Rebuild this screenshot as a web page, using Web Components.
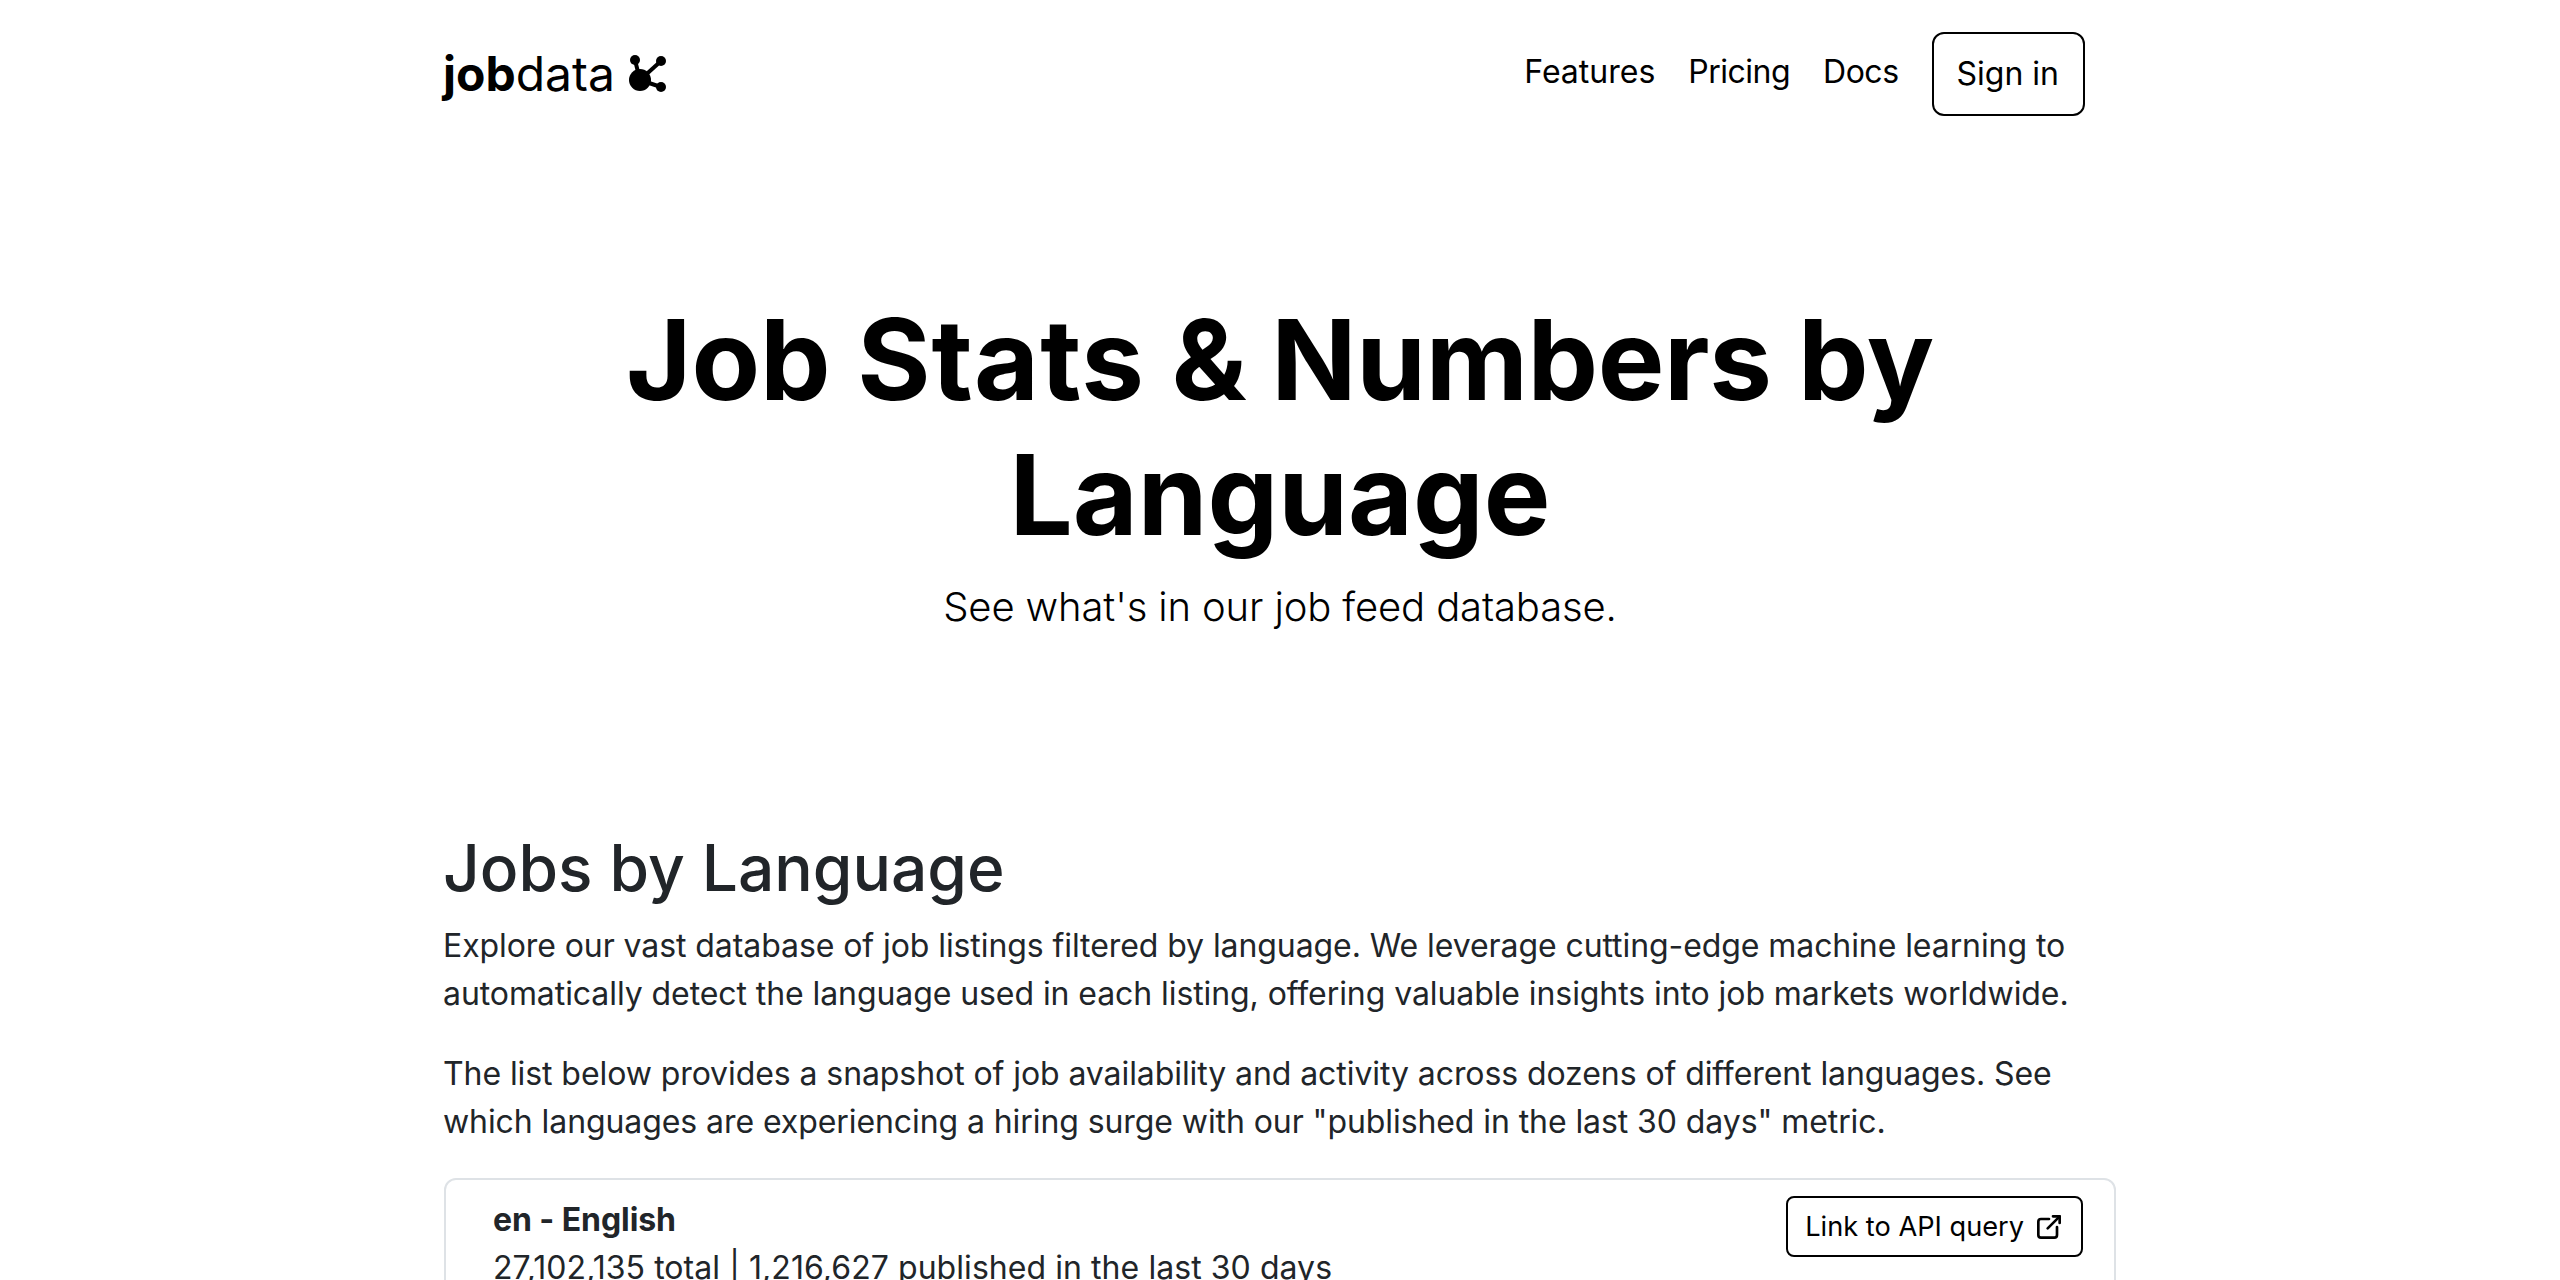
<!DOCTYPE html>
<html lang="en">
<head>
<meta charset="utf-8">
<title>Job Stats & Numbers by Language</title>
<style>
    html, body { margin: 0; padding: 0; background: #fff; }
    body { height: 1280px; overflow: hidden; font-family: Inter, "Liberation Sans", sans-serif; color: #212529; }
</style>
</head>
<body>
<site-nav></site-nav>
<hero-block lead="See what's in our job feed database.">Job <span style="letter-spacing: 1px">Stats</span> <span style="margin-right: -2px">&amp;</span> <span style="letter-spacing: -0.4px">Numbers</span> by<br>Language</hero-block>
<stats-section heading="Jobs by Language">
    <p>Explore our vast database of job listings filtered by language. We leverage cutting-edge machine learning to automatically detect the language used in each listing, offering valuable insights into job markets worldwide.</p>
    <p>The list below provides a snapshot of job availability and activity across dozens of different languages. See which languages are experiencing a hiring surge with our "published in the last 30 days" metric.</p>
    <lang-card name="en - English" total="27,102,135" recent="1,216,627"></lang-card>
</stats-section>

<script>
// -----------------------------------------
// Top navigation
// -----------------------------------------
class SiteNav extends HTMLElement {
    constructor() {
        super();
        this.attachShadow({ mode: 'open' });
        this.shadowRoot.innerHTML = `
            <style>
                :host { display: block; width: 1680px; margin: 0 auto; color: #000; }
                nav { display: flex; justify-content: space-between; align-items: center; padding: 32px 35px 0 3px; height: 84px; }
                .brand { display: flex; align-items: center; gap: 13px; font-size: 48px; line-height: 84px; color: #000; }
                .brand b { font-weight: 700; }
                .brand span { font-weight: 400; }
                .brand svg { display: block; width: 40px; height: 40px; margin-top: -4px; }
                .links { display: flex; align-items: center; gap: 33px; font-size: 32px; }
                .links span { padding-bottom: 5px; }
                .links .tight { letter-spacing: -0.5px; }
                .links .signin { display: block; margin-left: 0; padding: 0 24px 0 23px; height: 80px; line-height: 80px; border: 2px solid #000; border-radius: 12px; }
            </style>
            <nav>
                <div class="brand">
                    <div><b>job</b><span>data</span></div>
                    <svg viewBox="0 0 40 40" aria-hidden="true">
                        <g stroke="#000" stroke-width="4">
                            <line x1="7" y1="8" x2="12" y2="28"/>
                            <line x1="33" y1="9" x2="12" y2="28"/>
                            <line x1="33" y1="35" x2="12" y2="28"/>
                        </g>
                        <circle cx="12" cy="28" r="11"/>
                        <circle cx="7" cy="8" r="5"/>
                        <circle cx="33" cy="9" r="5"/>
                        <circle cx="33" cy="35" r="5"/>
                    </svg>
                </div>
                <div class="links">
                    <span>Features</span>
                    <span class="tight">Pricing</span>
                    <span class="tight">Docs</span>
                    <span class="signin">Sign in</span>
                </div>
            </nav>
        `;
    }
}

// -----------------------------------------
// Page hero
// -----------------------------------------
class HeroBlock extends HTMLElement {
    constructor() {
        super();
        this.attachShadow({ mode: 'open' });
        this.shadowRoot.innerHTML = `
            <style>
                :host { display: block; text-align: center; padding-top: 176px; }
                h1 { margin: 0 auto 15px; width: 1400px; font-size: 112px; line-height: 135px; font-weight: 700; color: #000; }
                p { margin: 0; font-size: 40px; line-height: 60px; font-weight: 300; letter-spacing: -0.13px; color: #000; }
            </style>
            <h1><slot></slot></h1>
            <p></p>
        `;
        this.shadowRoot.querySelector('p').textContent = this.getAttribute('lead');
    }
}

// -----------------------------------------
// Section with slotted copy and cards
// -----------------------------------------
class StatsSection extends HTMLElement {
    constructor() {
        super();
        this.attachShadow({ mode: 'open' });
        this.shadowRoot.innerHTML = `
            <style>
                :host { display: block; width: 1672px; margin: 0 auto; padding-top: 192px; font-size: 32px; line-height: 48px; letter-spacing: -0.08px; }
                h2 { margin: 0 0 16px -1px; padding: 0; font-size: 64px; line-height: 77px; font-weight: 500; letter-spacing: 0; }
                ::slotted(p) { margin: 0 0 32px -1px; }
            </style>
            <h2></h2>
            <slot></slot>
        `;
        this.shadowRoot.querySelector('h2').textContent = this.getAttribute('heading');
    }
}

// -----------------------------------------
// One language row
// -----------------------------------------
class LangCard extends HTMLElement {
    constructor() {
        super();
        this.attachShadow({ mode: 'open' });
        this.shadowRoot.innerHTML = `
            <style>
                :host { display: block; border: 2px solid #dee2e6; border-radius: 12px; }
                .row { display: flex; justify-content: space-between; align-items: flex-start; padding: 16px 31px 16px 47px; }
                .name { font-weight: 700; }
                .counts { letter-spacing: 0.06px; }
                a { display: flex; align-items: center; gap: 9px; height: 57px; padding: 0 16px 0 17px; border: 2px solid #000; border-radius: 8px; font-size: 27.2px; line-height: 42px; color: #000; letter-spacing: 0; }
                svg { display: block; width: 32px; height: 32px; }
            </style>
            <div class="row">
                <div>
                    <div class="name"></div>
                    <div class="counts"><span class="total"></span> total | <span class="recent"></span> published in the last 30 days</div>
                </div>
                <a>Link to API query
                    <svg viewBox="0 0 24 24" fill="none" stroke="currentColor" stroke-width="2" stroke-linecap="round" stroke-linejoin="round" aria-hidden="true">
                        <path d="M12 6h-6a2 2 0 0 0 -2 2v10a2 2 0 0 0 2 2h10a2 2 0 0 0 2 -2v-6"/>
                        <path d="M11 13l9 -9"/>
                        <path d="M15 4h5v5"/>
                    </svg>
                </a>
            </div>
        `;
        this.shadowRoot.querySelector('.name').textContent = this.getAttribute('name');
        this.shadowRoot.querySelector('.total').textContent = this.getAttribute('total');
        this.shadowRoot.querySelector('.recent').textContent = this.getAttribute('recent');
    }
}

customElements.define('site-nav', SiteNav);
customElements.define('hero-block', HeroBlock);
customElements.define('stats-section', StatsSection);
customElements.define('lang-card', LangCard);
</script>
</body>
</html>
